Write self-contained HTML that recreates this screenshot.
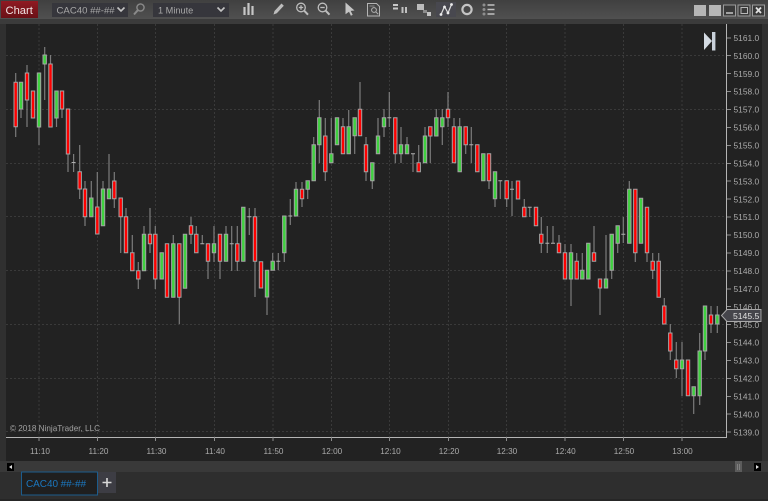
<!DOCTYPE html>
<html>
<head>
<meta charset="utf-8">
<style>
html,body{margin:0;padding:0;background:#2e2e2e;width:768px;height:501px;overflow:hidden}
svg{display:block;filter:blur(.35px)}
text{font-family:"Liberation Sans",sans-serif}
.p text{font-size:8.4px;fill:#ababab}
.t text{font-size:8.2px;fill:#ababab;text-anchor:middle}
</style>
</head>
<body>
<svg width="768" height="501" viewBox="0 0 768 501" xmlns="http://www.w3.org/2000/svg">
<defs>
<linearGradient id="r" x1="0" y1="0" x2="0" y2="1"><stop offset="0" stop-color="#8f1a22"/><stop offset="1" stop-color="#6a1016"/></linearGradient>
<linearGradient id="tb" x1="0" y1="0" x2="0" y2="1"><stop offset="0" stop-color="#404040"/><stop offset="1" stop-color="#505050"/></linearGradient>
</defs>
<rect width="768" height="501" fill="#2e2e2e"/>
<rect width="768" height="19" fill="url(#tb)"/>
<rect y="19" width="768" height="5" fill="#3b3b3b"/>
<rect y="24" width="6" height="448" fill="#303030"/>
<rect x="762" y="24" width="6" height="448" fill="#303030"/>
<rect x="6" y="24" width="756" height="437" fill="#222222"/>
<rect x="0" y="461" width="768" height="11" fill="#393939"/>

<!-- toolbar -->
<rect x="1" y="1" width="37" height="17" fill="url(#r)"/>
<text x="5.5" y="14" font-size="11.2" fill="#f0e4e4">Chart</text>
<rect x="52" y="3" width="76" height="14" fill="#36363c"/>
<svg x="52" y="3" width="58" height="14"><text x="4.5" y="10.5" font-size="9.6" fill="#a8a8a8">CAC40 ##-##</text></svg>
<path d="M117.5 7.5l3.5 3.5 3.5-3.5" fill="none" stroke="#c4c4c4" stroke-width="1.6"/>
<circle cx="140.5" cy="7.5" r="3.6" fill="none" stroke="#8a8a8a" stroke-width="1.4"/>
<path d="M137.8 10.2L134 14.5" stroke="#8a8a8a" stroke-width="2"/>
<rect x="153" y="3" width="76" height="14" fill="#36363c"/>
<text x="158" y="13.5" font-size="9.2" fill="#a8a8a8">1 Minute</text>
<path d="M217.5 7.5l3.5 3.5 3.5-3.5" fill="none" stroke="#c4c4c4" stroke-width="1.6"/>
<path d="M244.5 7v8M248.5 3v12M252.5 6v9" stroke="#c6c6c6" stroke-width="2.2"/>
<path d="M273.5 14.5l1-3.5 7-7.5 2.3 2.3-7 7.5z" fill="#bdbdbd"/>
<g fill="none" stroke="#bdbdbd" stroke-width="1.3">
<circle cx="301" cy="7.5" r="4.3"/><path d="M298.8 7.5h4.4M301 5.3v4.4"/><path d="M304.2 10.7l3.8 4" stroke-width="2"/>
<circle cx="322.5" cy="7.5" r="4.3"/><path d="M320.3 7.5h4.4"/><path d="M325.7 10.7l3.8 4" stroke-width="2"/>
</g>
<path d="M345.5 2.5l9 8-3.8.4 2 4-1.8.8-1.9-4-3.5 2.6z" fill="#c4c4c4"/>
<g fill="none" stroke="#b4b4b4" stroke-width="1">
<path d="M367.5 3.5h9l3 3v9.5h-12z"/><circle cx="374" cy="10" r="2.4"/><path d="M375.8 11.8l2.4 2.4"/>
<path d="M369.5 6h5" stroke="#8a8a8a"/>
</g>
<path d="M393 5h5M393 8.5h5" stroke="#c8c8c8" stroke-width="2"/>
<path d="M402.5 7v6M406 7v6" stroke="#c0c0c0" stroke-width="2"/>
<rect x="417" y="4" width="7" height="6" fill="#bcbcbc"/>
<rect x="423" y="10" width="4" height="3" fill="#8c8c8c"/>
<rect x="427" y="12" width="4" height="4" fill="#c4c4c4"/>
<rect x="436" y="2" width="20" height="15" fill="#48484f"/>
<path d="M441 14.5L444.5 6.5 448 13 451.5 4.5" fill="none" stroke="#dcdcdc" stroke-width="1.2"/>
<g fill="#ececec"><circle cx="441" cy="14.5" r="1.4"/><circle cx="444.5" cy="7" r="1.4"/><circle cx="448" cy="13" r="1.4"/><circle cx="451.5" cy="4.5" r="1.4"/></g>
<circle cx="467" cy="9.5" r="4.6" fill="none" stroke="#c4c4c4" stroke-width="2.2"/>
<g fill="#8e8e8e"><circle cx="484" cy="5" r="1.5"/><circle cx="484" cy="9.5" r="1.5"/><circle cx="484" cy="14" r="1.5"/></g>
<path d="M487.5 5h7M487.5 9.5h7M487.5 14h7" stroke="#c0c0c0" stroke-width="1.4"/>
<rect x="694" y="5" width="12" height="11" fill="#b6b6b6"/>
<rect x="709" y="5" width="12" height="11" fill="#b6b6b6"/>
<g fill="#3a3a3a" stroke="#9c9c9c" stroke-width="1">
<rect x="723.5" y="5" width="12" height="11"/><rect x="738" y="5" width="12" height="11"/><rect x="752.5" y="5" width="12" height="11"/>
</g>
<path d="M726 13h7" stroke="#d0d0d0" stroke-width="1.4"/>
<rect x="741" y="7.5" width="6.5" height="6" fill="none" stroke="#b8b8b8"/>
<path d="M756 7.5l5 5.5M761 7.5l-5 5.5" stroke="#e0e0e0" stroke-width="1.8"/>

<!-- grid -->
<g stroke="#3a3a3a" stroke-width="1" stroke-dasharray="2 2" fill="none">
<path d="M6 55.5H726M6 109.5H726M6 163.5H726M6 216.5H726M6 270.5H726M6 324.5H726M6 378.5H726M6 431.5H726"/>
<path d="M39 24V437M97.5 24V437M155.5 24V437M214.5 24V437M273 24V437M331.5 24V437M389.5 24V437M448.5 24V437M506.5 24V437M565 24V437M623.5 24V437M682 24V437"/>
</g>

<text x="10" y="431" font-size="8.2" fill="#a2a2a2" textLength="90" lengthAdjust="spacingAndGlyphs">© 2018 NinjaTrader, LLC</text>

<!-- wicks -->
<path fill="none" stroke="#7c7c7c" stroke-width="1.2" d="M15.7 73V137M21 82V118M27 65V127M39 73V145M44.7 47V100M50.5 55V127M56.5 91V127M62 91V118M68 109V172M73.6 154V172M79.7 145V199M85 181V226M91.3 181V217M97.3 172V234M103 181V226M109 154V199M114.3 172V208M120.7 198V253M126 208V253M132.3 235V271M138.3 262V289M144 226V271M150 208V253M155.3 226V289M173.3 235V297M179.3 244V324M191 217V244M196.3 226V253M202.3 235V244M208 244V279M214 226V262M220 234V279M226 226V261M231.7 226V271M237.3 226V271M249.3 208V235M255 208V297M261 262V288M267 270V315M272.7 253V270M278.3 253V270M284.3 216V262M290.3 199V225M296 182V216M302 182V207M307.7 181V199M313.7 137V181M319.3 100V163M325.3 118V181M331.3 118V163M343 118V154M348.7 110V154M354.7 118V154M360 82V136M366 137V181M372.3 163V189M378 118V154M384 109V137M389.3 92V127M395.3 118V163M401 127V163M407 137V154M413 154V172M418.7 145V172M425 127V163M430.3 127V163M436.3 109V136M442.3 109V145M448 92V127M454 118V163M459.7 118V172M465.7 127V154M471.3 127V163M489 154V189M495 172V207M500.3 181V199M506.7 181V207M512 181V216M524.3 199V217M529.7 207V217M541.3 217V253M547.3 226V253M553 226V243M559 235V253M565 244V279M571 244V306M576.7 253V279M582.3 253V279M594 226V261M600 279V315M606 235V288M611.7 234V279M617.7 226V253M623.3 217V243M629.3 181V243M635.3 189V262M647 207V262M652.7 253V279M658.7 253V297M664.3 298V324M670.3 324V360M676.3 342V378M682 342V396M693.7 387V414M699.7 333V405M705 306V360M711 306V333M717.3 306V333"/>
<!-- dojis -->
<path fill="none" stroke="#b0b0b0" stroke-width="1" d="M71.6 162.5h4M200.3 243.7h4M229.7 243.7h4M247.3 216.7h4M276.3 261.3h4M288.3 216h4M387.3 117.7h4M411 153.7h4M469.3 144.7h4M498.3 180.7h4M510 189.3h4M527.7 207.3h4M545.3 243.3h4M551 243.3h4M621.3 234.3h4"/>
<!-- red bodies -->
<path fill="#ff0000" stroke="#a4a4a4" stroke-width="1" d="M15.7 82.3m-1.7 0h3.4V126.7h-3.4zM27 73m-1.7 0h3.4V100h-3.4zM33 91m-1.7 0h3.4V118h-3.4zM50.5 64m-1.7 0h3.4V127h-3.4zM62 91m-1.7 0h3.4V109h-3.4zM68 109m-1.7 0h3.4V154h-3.4zM79.7 171.7m-1.7 0h3.4V189h-3.4zM85 189m-1.7 0h3.4V216.7h-3.4zM97.3 207m-1.7 0h3.4V234h-3.4zM114.3 181m-1.7 0h3.4V198.7h-3.4zM120.7 198m-1.7 0h3.4V216.7h-3.4zM126 216.7m-1.7 0h3.4V252.7h-3.4zM132.3 252.7m-1.7 0h3.4V270.7h-3.4zM138.3 270.7m-1.7 0h3.4V279h-3.4zM150 234.3m-1.7 0h3.4V243.7h-3.4zM155.3 234.3m-1.7 0h3.4V279h-3.4zM167 243.7m-1.7 0h3.4V297.3h-3.4zM179.3 243.7m-1.7 0h3.4V297.3h-3.4zM191 225.7m-1.7 0h3.4V234.3h-3.4zM196.3 234.3m-1.7 0h3.4V252.7h-3.4zM208 243.7m-1.7 0h3.4V261.3h-3.4zM220 234.3m-1.7 0h3.4V261.3h-3.4zM237.3 243.7m-1.7 0h3.4V261.3h-3.4zM255 216.7m-1.7 0h3.4V261.3h-3.4zM261 261.7m-1.7 0h3.4V288h-3.4zM302 189.3m-1.7 0h3.4V198.7h-3.4zM325.3 136m-1.7 0h3.4V171.7h-3.4zM343 126.7m-1.7 0h3.4V153.7h-3.4zM360 109.3m-1.7 0h3.4V135.7h-3.4zM366 144.7m-1.7 0h3.4V171.7h-3.4zM395.3 117.7m-1.7 0h3.4V153.7h-3.4zM418.7 162.7m-1.7 0h3.4V171.7h-3.4zM430.3 126.7m-1.7 0h3.4V136h-3.4zM448 109.3m-1.7 0h3.4V117.7h-3.4zM454 126.7m-1.7 0h3.4V162.7h-3.4zM465.7 126.7m-1.7 0h3.4V144.7h-3.4zM477.3 144.7m-1.7 0h3.4V171.7h-3.4zM489 153.7m-1.7 0h3.4V180.7h-3.4zM506.7 180.7m-1.7 0h3.4V198.7h-3.4zM518 181m-1.7 0h3.4V199h-3.4zM524.3 207.3m-1.7 0h3.4V216.7h-3.4zM536 207.3m-1.7 0h3.4V225.7h-3.4zM541.3 234.3m-1.7 0h3.4V243.3h-3.4zM559 243.3m-1.7 0h3.4V252.7h-3.4zM565 252.7m-1.7 0h3.4V279h-3.4zM576.7 261.3m-1.7 0h3.4V279h-3.4zM594 252.7m-1.7 0h3.4V261.3h-3.4zM600 279m-1.7 0h3.4V288h-3.4zM635.3 189.3m-1.7 0h3.4V252.7h-3.4zM647 207.3m-1.7 0h3.4V252.7h-3.4zM652.7 261.3m-1.7 0h3.4V270.3h-3.4zM658.7 261.3m-1.7 0h3.4V297.3h-3.4zM664.3 306m-1.7 0h3.4V324h-3.4zM670.3 333m-1.7 0h3.4V351h-3.4zM676.3 360m-1.7 0h3.4V368.7h-3.4zM688 360m-1.7 0h3.4V395.7h-3.4zM711 315m-1.7 0h3.4V324h-3.4z"/>
<!-- green bodies -->
<path fill="#3fd13f" stroke="#a4a4a4" stroke-width="1" d="M21 82.3m-1.7 0h3.4V109h-3.4zM39 73m-1.7 0h3.4V127h-3.4zM44.7 55m-1.7 0h3.4V64h-3.4zM56.5 91m-1.7 0h3.4V118h-3.4zM91.3 198m-1.7 0h3.4V216.7h-3.4zM103 189m-1.7 0h3.4V225.7h-3.4zM109 189m-1.7 0h3.4V198.7h-3.4zM144 234.3m-1.7 0h3.4V270.7h-3.4zM161.7 252.7m-1.7 0h3.4V279h-3.4zM173.3 243.7m-1.7 0h3.4V297.3h-3.4zM185 234.3m-1.7 0h3.4V288.3h-3.4zM214 243.7m-1.7 0h3.4V252.7h-3.4zM226 234.3m-1.7 0h3.4V261.3h-3.4zM243.3 207.3m-1.7 0h3.4V261.3h-3.4zM267 270.3m-1.7 0h3.4V297h-3.4zM272.7 261.3m-1.7 0h3.4V270.3h-3.4zM284.3 216m-1.7 0h3.4V252.7h-3.4zM296 189.3m-1.7 0h3.4V216h-3.4zM307.7 180.7m-1.7 0h3.4V189.3h-3.4zM313.7 144.7m-1.7 0h3.4V180.7h-3.4zM319.3 117.7m-1.7 0h3.4V144.7h-3.4zM331.3 153.7m-1.7 0h3.4V162.7h-3.4zM337 117.7m-1.7 0h3.4V144.7h-3.4zM348.7 126.7m-1.7 0h3.4V153.7h-3.4zM354.7 117.7m-1.7 0h3.4V135.7h-3.4zM372.3 162.7m-1.7 0h3.4V180.7h-3.4zM378 136m-1.7 0h3.4V153.7h-3.4zM384 117.7m-1.7 0h3.4V126.7h-3.4zM401 144.7m-1.7 0h3.4V153.7h-3.4zM407 144.7m-1.7 0h3.4V153.7h-3.4zM425 136m-1.7 0h3.4V162.7h-3.4zM436.3 117.7m-1.7 0h3.4V136h-3.4zM442.3 117.7m-1.7 0h3.4V126.7h-3.4zM459.7 126.7m-1.7 0h3.4V171.7h-3.4zM483.3 153.7m-1.7 0h3.4V180.7h-3.4zM495 171.7m-1.7 0h3.4V198.7h-3.4zM571 252.7m-1.7 0h3.4V279h-3.4zM582.3 270.3m-1.7 0h3.4V279h-3.4zM588.3 243.3m-1.7 0h3.4V279h-3.4zM606 279m-1.7 0h3.4V288h-3.4zM611.7 234.3m-1.7 0h3.4V270.3h-3.4zM617.7 225.7m-1.7 0h3.4V243.3h-3.4zM629.3 189.3m-1.7 0h3.4V243.3h-3.4zM641 198.3m-1.7 0h3.4V243.3h-3.4zM682 360m-1.7 0h3.4V368.7h-3.4zM693.7 386.7m-1.7 0h3.4V395.7h-3.4zM699.7 351m-1.7 0h3.4V395.7h-3.4zM705 306m-1.7 0h3.4V351h-3.4zM717.3 315m-1.7 0h3.4V324h-3.4z"/>

<!-- axes -->
<path d="M726.5 24V437.5H6" fill="none" stroke="#b4b4b4" stroke-width="1"/>
<path fill="none" stroke="#8c8c8c" stroke-width="1" d="M39 437v4M97.5 437v4M155.5 437v4M214.5 437v4M273 437v4M331.5 437v4M389.5 437v4M448.5 437v4M506.5 437v4M565 437v4M623.5 437v4M682 437v4M727 38h4M727 55.5h4M727 73.5h4M727 91.5h4M727 109.5h4M727 127.5h4M727 145.5h4M727 163.5h4M727 181h4M727 199h4M727 217h4M727 235h4M727 253h4M727 271h4M727 289h4M727 306.5h4M727 324.5h4M727 342.5h4M727 360.5h4M727 378.5h4M727 396.5h4M727 414h4M727 432h4"/>

<g class="p">
<text x="733.5" y="41">5161.0</text><text x="733.5" y="59">5160.0</text><text x="733.5" y="76.8">5159.0</text><text x="733.5" y="94.7">5158.0</text><text x="733.5" y="112.6">5157.0</text><text x="733.5" y="130.6">5156.0</text><text x="733.5" y="148.5">5155.0</text><text x="733.5" y="166.4">5154.0</text><text x="733.5" y="184.3">5153.0</text><text x="733.5" y="202.3">5152.0</text><text x="733.5" y="220.2">5151.0</text><text x="733.5" y="238.1">5150.0</text><text x="733.5" y="256.1">5149.0</text><text x="733.5" y="274">5148.0</text><text x="733.5" y="291.9">5147.0</text><text x="733.5" y="309.9">5146.0</text><text x="733.5" y="327.8">5145.0</text><text x="733.5" y="345.7">5144.0</text><text x="733.5" y="363.6">5143.0</text><text x="733.5" y="381.6">5142.0</text><text x="733.5" y="399.5">5141.0</text><text x="733.5" y="417.4">5140.0</text><text x="733.5" y="435.4">5139.0</text>
</g>
<g class="t">
<text x="40" y="454">11:10</text><text x="98.5" y="454">11:20</text><text x="156.5" y="454">11:30</text><text x="215" y="454">11:40</text><text x="273.5" y="454">11:50</text><text x="332" y="454">12:00</text><text x="390.5" y="454">12:10</text><text x="449" y="454">12:20</text><text x="507" y="454">12:30</text><text x="565.5" y="454">12:40</text><text x="624" y="454">12:50</text><text x="682.5" y="454">13:00</text>
</g>

<!-- price marker -->
<path d="M721.5 315.5L727 309.5H761V321.5H727z" fill="#45454b" stroke="#a8a8a8" stroke-width="1"/>
<text x="733" y="319" font-size="8.6" fill="#e0e0e0">5145.5</text>

<!-- jump icon -->
<path d="M704 32.5L712 41 704 50z" fill="#d4dbe2"/>
<rect x="712" y="32" width="3.4" height="18.5" fill="#c9d1da"/>

<!-- scrollbar -->
<rect x="7" y="463" width="7" height="8" fill="#000"/>
<path d="M9 467l3-2v4z" fill="#ddd"/>
<rect x="735" y="461" width="7" height="11" fill="#5c5c5c"/>
<path d="M737.5 464v6M739.5 464v6" stroke="#8a8a8a" stroke-width=".8"/>
<rect x="754" y="463" width="7" height="8" fill="#000"/>
<path d="M759 467l-3-2v4z" fill="#ddd"/>

<!-- tabs -->
<rect x="21.5" y="472" width="76" height="23" fill="#1f1f1f" stroke="#1c5c8c" stroke-width="1"/>
<text x="26" y="487" font-size="10" fill="#1b76bd" textLength="60">CAC40 ##-##</text>
<rect x="98" y="472" width="18" height="21" fill="#3d3d44"/>
<path d="M102.5 482.5h9M107 478v9" stroke="#d8d8d8" stroke-width="1.6"/>
<rect y="499" width="768" height="2" fill="#262626"/>
</svg>
</body>
</html>
